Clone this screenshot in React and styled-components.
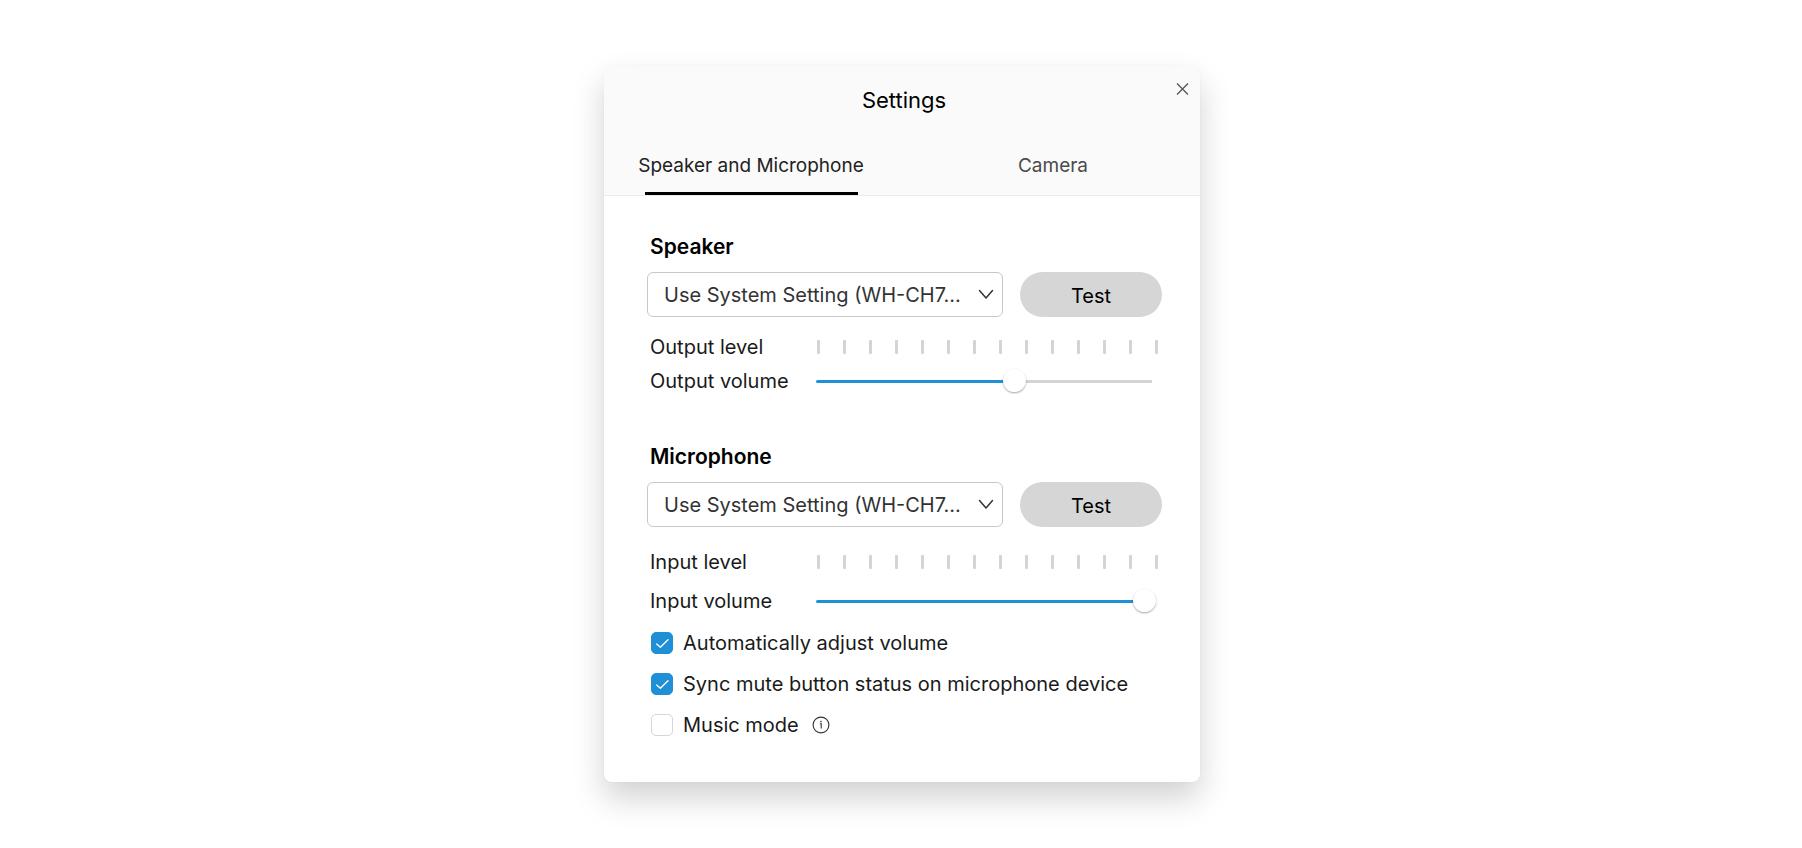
import React, { Component } from 'react';
import styled, { createGlobalStyle } from 'styled-components';

const GlobalStyle = createGlobalStyle`
    * {
        box-sizing: border-box;
    }

    body {
        margin: 0;
        background-color: white;
        color: #1a1a1a;
        font-family: Inter, "Liberation Sans", sans-serif;
        font-size: 20px;
        line-height: 24px;
    }

    button, select, input {
        font: inherit;
        color: inherit;
        margin: 0;
    }
`;

const Page = styled.main`
    display: flex;
    justify-content: center;
    padding: 66px 16px 66px 18px;
`;

const Dialog = styled.section`
    width: 100%;
    max-width: 596px;
    border-radius: 8px;
    background-color: white;
    box-shadow: 0 16px 32px rgba(0, 0, 0, 0.18), 0 0 2px rgba(0, 0, 0, 0.06);
`;

const Header = styled.header`
    position: relative;
    background-color: #fafafa;
    border-bottom: 1px solid #ececec;
    border-radius: 8px 8px 0 0;
`;

const Title = styled.h1`
    margin: 0;
    padding: 22px 0 24px 4px;
    font-size: 22px;
    font-weight: 400;
    line-height: 24px;
    text-align: center;
    color: black;
`;

const CloseButton = styled.button`
    position: absolute;
    top: 9px;
    right: 4px;
    display: flex;
    padding: 4px;
    border: none;
    background: none;
    cursor: pointer;
`;

const Tabs = styled.div`
    display: grid;
    grid-template-columns: 1fr 1fr;
    column-gap: 8px;
`;

const Tab = styled.button`
    display: flex;
    justify-content: center;
    height: 59px;
    padding: 18px 0 0;
    border: none;
    background: linear-gradient(black, black) center bottom / ${props => (props.$active ? '213px 3px' : '0 0')} no-repeat;
    font-size: 19px;
    line-height: 24px;
    white-space: nowrap;
    color: ${props => (props.$active ? '#222' : '#4a4a4a')};
    cursor: pointer;
`;

const Body = styled.div`
    padding: 39px 38px 45px 43px;
`;

const Section = styled.section`
    & + & {
        margin-top: 52px;
    }
`;

const SectionTitle = styled.h2`
    margin: 0 0 13px 3px;
    font-size: 21px;
    font-weight: 600;
    line-height: 24px;
    color: black;
`;

const DeviceRow = styled.div`
    display: flex;
    gap: 17px;
`;

const SelectBox = styled.div`
    position: relative;
    flex: 1;
    min-width: 0;

    svg {
        position: absolute;
        top: 17px;
        right: 9px;
        pointer-events: none;
    }
`;

const Select = styled.select`
    appearance: none;
    width: 100%;
    height: 45px;
    padding: 0 30px 0 16px;
    border: 1px solid #c8c8c8;
    border-radius: 6px;
    background-color: white;
    color: #333;
    text-overflow: ellipsis;
`;

const TestButton = styled.button`
    width: 142px;
    height: 45px;
    padding: 2px 0 0;
    border: none;
    border-radius: 23px;
    background-color: #d6d6d6;
    color: black;
    cursor: pointer;
`;

const Levels = styled.div`
    display: grid;
    grid-template-columns: 166px 1fr;
    align-items: center;
    row-gap: ${props => props.$gap}px;
    margin: ${props => props.$top}px 4px 0 3px;
`;

const Meter = styled.div`
    display: flex;
    justify-content: space-between;
    padding-left: 1px;
`;

const Tick = styled.span`
    width: 3px;
    height: 14px;
    border-radius: 1px;
    background-color: #d4d4d4;
`;

const Slider = styled.input`
    appearance: none;
    width: calc(100% - 2px);
    height: 24px;
    background: transparent;
    cursor: pointer;

    &::-webkit-slider-runnable-track {
        height: 3px;
        border-radius: 2px;
        background: linear-gradient(to right, #1f8fd6 ${props => props.value}%, #d4d4d4 ${props => props.value}%) left / calc(100% - 4px) 100% no-repeat;
    }

    &::-webkit-slider-thumb {
        appearance: none;
        width: 23px;
        height: 23px;
        margin-top: -11px;
        border-radius: 50%;
        background-color: white;
        box-shadow: 0 1px 2px rgba(0, 0, 0, 0.35);
    }
`;

const Options = styled.div`
    display: flex;
    flex-direction: column;
    gap: 17px;
    margin: 18px 0 0 4px;
`;

const Option = styled.div`
    display: flex;
    align-items: center;

    label {
        padding-left: 10px;
    }
`;

const CheckBox = styled.span`
    display: grid;

    input, svg {
        grid-area: 1 / 1;
    }

    svg {
        z-index: 1;
        pointer-events: none;
    }
`;

const CheckInput = styled.input`
    appearance: none;
    width: 22px;
    height: 22px;
    border: 1px solid #d6d6d6;
    border-radius: 5px;
    background-color: white;

    &:checked {
        border-color: #1f8fd6;
        background-color: #1f8fd6;
    }
`;

const InfoButton = styled.button`
    display: flex;
    margin-left: 13px;
    padding: 0;
    border: none;
    background: none;
    cursor: pointer;
`;

const CloseIcon = () => (
    <svg width="19" height="19" viewBox="0 0 19 19" fill="none" stroke="#555" strokeWidth="1.3">
        <path d="M4 4.5L15 15.5M15 4.5L4 15.5" />
    </svg>
);

const ChevronIcon = () => (
    <svg width="16" height="12" viewBox="0 0 16 12" fill="none" stroke="#333" strokeWidth="1.5" strokeLinecap="round" strokeLinejoin="round">
        <path d="M1.5 1.5L8 9L14.5 1.5" />
    </svg>
);

const CheckIcon = () => (
    <svg width="22" height="22" viewBox="0 0 22 22" fill="none" stroke="white" strokeWidth="1.3" strokeLinecap="round" strokeLinejoin="round">
        <path d="M5.7 12L9.4 15.3L17 7.7" />
    </svg>
);

const InfoIcon = () => (
    <svg width="18" height="18" viewBox="0 0 18 18" fill="none" stroke="#333" strokeWidth="1.1">
        <circle cx="9" cy="9" r="7.9" />
        <path d="M7.8 7.8H9.2V12.6" />
        <circle cx="9" cy="5.6" r="0.8" fill="#333" stroke="none" />
    </svg>
);

const ticks = [ 1, 2, 3, 4, 5, 6, 7, 8, 9, 10, 11, 12, 13, 14 ];

const options = [
    { id: 'auto', label: 'Automatically adjust volume' },
    { id: 'sync', label: 'Sync mute button status on microphone device' },
    { id: 'music', label: 'Music mode', info: true },
];

const Device = ({ name, kind, volume, onVolume, top, gap }) => (
    <>
        <SectionTitle>{name}</SectionTitle>
        <DeviceRow>
            <SelectBox>
                <Select aria-label={name}>
                    <option>Use System Setting (WH-CH7...</option>
                </Select>
                <ChevronIcon />
            </SelectBox>
            <TestButton type="button">Test</TestButton>
        </DeviceRow>
        <Levels $top={top} $gap={gap}>
            <span id={`${kind}-level`}>{kind} level</span>
            <Meter role="meter" aria-labelledby={`${kind}-level`} aria-valuenow={0}>
                {ticks.map(tick => <Tick key={tick} />)}
            </Meter>
            <label htmlFor={`${kind}-volume`}>{kind} volume</label>
            <Slider id={`${kind}-volume`} type="range" value={volume} onChange={onVolume} />
        </Levels>
    </>
);

class App extends Component {
    state = {
        tab: 'audio',
        output: 59,
        input: 100,
        auto: true,
        sync: true,
        music: false,
    };

    render() {
        const { tab, output, input } = this.state;

        return (
            <Page>
                <GlobalStyle />
                <Dialog>
                    <Header>
                        <Title>Settings</Title>
                        <CloseButton type="button" aria-label="Close"><CloseIcon /></CloseButton>
                        <Tabs role="tablist">
                            <Tab type="button" role="tab" aria-selected={tab === 'audio'} $active={tab === 'audio'} onClick={() => this.setState({ tab: 'audio' })}>
                                Speaker and Microphone
                            </Tab>
                            <Tab type="button" role="tab" aria-selected={tab === 'camera'} $active={tab === 'camera'} onClick={() => this.setState({ tab: 'camera' })}>
                                Camera
                            </Tab>
                        </Tabs>
                    </Header>
                    <Body>
                        <Section>
                            <Device name="Speaker" kind="Output" top={18} gap={10} volume={output} onVolume={e => this.setState({ output: Number(e.target.value) })} />
                        </Section>
                        <Section>
                            <Device name="Microphone" kind="Input" top={23} gap={15} volume={input} onVolume={e => this.setState({ input: Number(e.target.value) })} />
                            <Options>
                                {options.map(({ id, label, info }) => (
                                    <Option key={id}>
                                        <CheckBox>
                                            <CheckInput id={id} type="checkbox" checked={this.state[id]} onChange={e => this.setState({ [id]: e.target.checked })} />
                                            {this.state[id] && <CheckIcon />}
                                        </CheckBox>
                                        <label htmlFor={id}>{label}</label>
                                        {info && <InfoButton type="button" aria-label="About music mode"><InfoIcon /></InfoButton>}
                                    </Option>
                                ))}
                            </Options>
                        </Section>
                    </Body>
                </Dialog>
            </Page>
        );
    }
}

export default App;
